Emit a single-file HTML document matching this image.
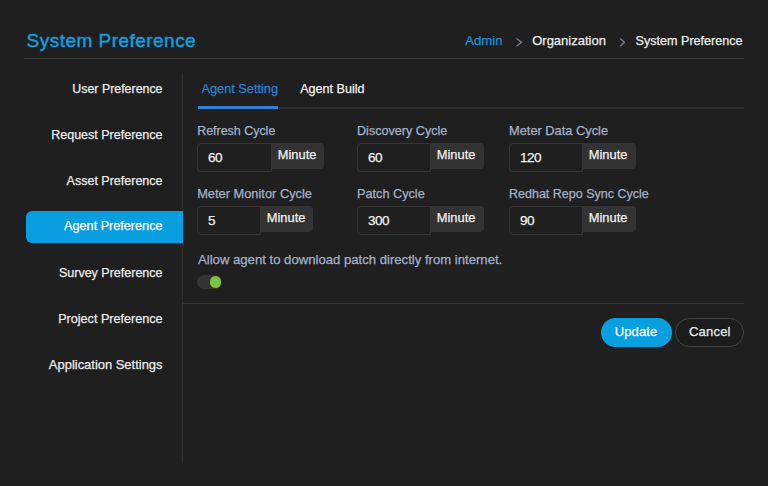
<!DOCTYPE html>
<html><head><meta charset="utf-8">
<style>
*{box-sizing:border-box;margin:0;padding:0}
html,body{width:768px;height:486px;overflow:hidden;background:#1f1f1f}
body{position:relative;font-family:"Liberation Sans",sans-serif;color:#e8e8e8}
.a{position:absolute;white-space:nowrap;line-height:1;-webkit-text-stroke:0.25px currentColor}
.hl{position:absolute;height:1px;background:#3a3a3a}
.vl{position:absolute;width:1px;background:#2e2e2e}
.inp{position:absolute;height:29px;border:1px solid #353535;border-radius:4px 0 0 4px;background:transparent}
.add{position:absolute;height:26px;background:#333333;border-radius:0 4px 4px 0}
</style></head><body>
<div class="a" style="left:26.60px;top:31.22px;font-size:19px;color:#10a0e0;letter-spacing:0.47px;-webkit-text-stroke:0.4px #10a0e0">System Preference</div>
<div class="a" style="left:465.20px;top:33.83px;font-size:13.2px;color:#1b90d2;">Admin</div>
<svg style="position:absolute;left:515px;top:37px" width="9" height="11" viewBox="0 0 9 11"><path d="M1.5 1.5 L6.6 5.3 L1.5 9.2" fill="none" stroke="#7d8591" stroke-width="1.25"/></svg>
<div class="a" style="left:532.20px;top:34.00px;font-size:13px;color:#ececec;">Organization</div>
<svg style="position:absolute;left:618px;top:37px" width="9" height="11" viewBox="0 0 9 11"><path d="M2.2 1.5 L6.4 5.3 L2.2 9.3" fill="none" stroke="#7d8591" stroke-width="1.25"/></svg>
<div class="a" style="left:635.50px;top:34.73px;font-size:12.6px;color:#ececec;">System Preference</div>
<div class="hl" style="left:24px;top:58px;width:720px"></div>
<div class="vl" style="left:182px;top:74px;height:389px"></div>
<div style="position:absolute;left:26px;top:211px;width:157px;height:32px;background:#089ee0;border-radius:6px 0 0 6px"></div>
<div class="a" style="right:605.50px;text-align:right;top:83.00px;font-size:12.4px;color:#ececec;">User Preference</div>
<div class="a" style="right:605.50px;text-align:right;top:128.89px;font-size:12.53px;color:#ececec;">Request Preference</div>
<div class="a" style="right:605.50px;text-align:right;top:175.02px;font-size:12.5px;color:#ececec;">Asset Preference</div>
<div class="a" style="right:605.50px;text-align:right;top:220.49px;font-size:12.65px;color:#ffffff;">Agent Preference</div>
<div class="a" style="right:605.50px;text-align:right;top:267.02px;font-size:12.5px;color:#ececec;">Survey Preference</div>
<div class="a" style="right:605.50px;text-align:right;top:312.93px;font-size:12.6px;color:#ececec;">Project Preference</div>
<div class="a" style="right:605.50px;text-align:right;top:358.74px;font-size:12.95px;color:#ececec;">Application Settings</div>
<div class="a" style="left:201.50px;top:83.01px;font-size:12.75px;color:#3080d2;">Agent Setting</div>
<div class="a" style="left:300.20px;top:83.23px;font-size:12.6px;color:#f0f0f0;">Agent Build</div>
<div style="position:absolute;left:278px;top:107px;width:466px;height:2px;background:#2c2c2c"></div>
<div style="position:absolute;left:197.6px;top:106px;width:80.6px;height:3px;background:#3080d2"></div>
<div class="a" style="left:197.20px;top:124.86px;font-size:12.45px;color:#a3b2cb;">Refresh Cycle</div>
<div class="inp" style="left:197px;top:143px;width:75px"></div>
<div class="add" style="left:271px;top:143px;width:53px"></div>
<div class="a" style="left:208.00px;top:150.77px;font-size:13.5px;color:#f0f0f0;letter-spacing:-0.45px">60</div>
<div class="a" style="left:277.80px;top:149.12px;font-size:12.85px;color:#f0f0f0;">Minute</div>
<div class="a" style="left:357.00px;top:124.93px;font-size:12.6px;color:#a3b2cb;">Discovery Cycle</div>
<div class="inp" style="left:357px;top:143px;width:74px"></div>
<div class="add" style="left:430px;top:143px;width:54px"></div>
<div class="a" style="left:368.00px;top:150.77px;font-size:13.5px;color:#f0f0f0;letter-spacing:-0.45px">60</div>
<div class="a" style="left:436.80px;top:149.12px;font-size:12.85px;color:#f0f0f0;">Minute</div>
<div class="a" style="left:509.00px;top:124.74px;font-size:12.83px;color:#a3b2cb;">Meter Data Cycle</div>
<div class="inp" style="left:509px;top:143px;width:74px"></div>
<div class="add" style="left:582px;top:143px;width:54px"></div>
<div class="a" style="left:520.00px;top:150.77px;font-size:13.5px;color:#f0f0f0;letter-spacing:-0.45px">120</div>
<div class="a" style="left:588.80px;top:149.12px;font-size:12.85px;color:#f0f0f0;">Minute</div>
<div class="a" style="left:197.20px;top:187.93px;font-size:12.84px;color:#a3b2cb;">Meter Monitor Cycle</div>
<div class="inp" style="left:197px;top:206px;width:64px"></div>
<div class="add" style="left:260px;top:206px;width:53px"></div>
<div class="a" style="left:208.00px;top:213.77px;font-size:13.5px;color:#f0f0f0;letter-spacing:-0.45px">5</div>
<div class="a" style="left:266.80px;top:212.12px;font-size:12.85px;color:#f0f0f0;">Minute</div>
<div class="a" style="left:357.00px;top:187.95px;font-size:12.7px;color:#a3b2cb;">Patch Cycle</div>
<div class="inp" style="left:357px;top:206px;width:74px"></div>
<div class="add" style="left:430px;top:206px;width:54px"></div>
<div class="a" style="left:368.00px;top:213.77px;font-size:13.5px;color:#f0f0f0;letter-spacing:-0.45px">300</div>
<div class="a" style="left:436.80px;top:212.12px;font-size:12.85px;color:#f0f0f0;">Minute</div>
<div class="a" style="left:509.00px;top:188.02px;font-size:12.5px;color:#a3b2cb;">Redhat Repo Sync Cycle</div>
<div class="inp" style="left:509px;top:206px;width:74px"></div>
<div class="add" style="left:582px;top:206px;width:54px"></div>
<div class="a" style="left:520.00px;top:213.77px;font-size:13.5px;color:#f0f0f0;letter-spacing:-0.45px">90</div>
<div class="a" style="left:588.80px;top:212.12px;font-size:12.85px;color:#f0f0f0;">Minute</div>
<div class="a" style="left:198.00px;top:252.89px;font-size:13.13px;color:#a3b2cb;">Allow agent to download patch directly from internet.</div>
<div style="position:absolute;left:197px;top:275px;width:25px;height:14px;border-radius:7px;background:#333"></div>
<div style="position:absolute;left:209.5px;top:276px;width:11.8px;height:11.8px;border-radius:50%;background:#7dc342"></div>
<div class="hl" style="left:183px;top:303px;width:561px;background:#333"></div>
<div style="position:absolute;left:600.5px;top:318.4px;width:71.5px;height:29px;border-radius:15px;background:#079fe0"></div>
<div class="a" style="left:614.80px;top:325.10px;font-size:13px;color:#ffffff;letter-spacing:0.1px">Update</div>
<div style="position:absolute;left:674.7px;top:318.4px;width:69.5px;height:29px;border-radius:15px;border:1.2px solid #434343;background:#1c1c1c"></div>
<div class="a" style="left:689.00px;top:325.00px;font-size:13px;color:#ececec;letter-spacing:0.2px">Cancel</div>
</body></html>
